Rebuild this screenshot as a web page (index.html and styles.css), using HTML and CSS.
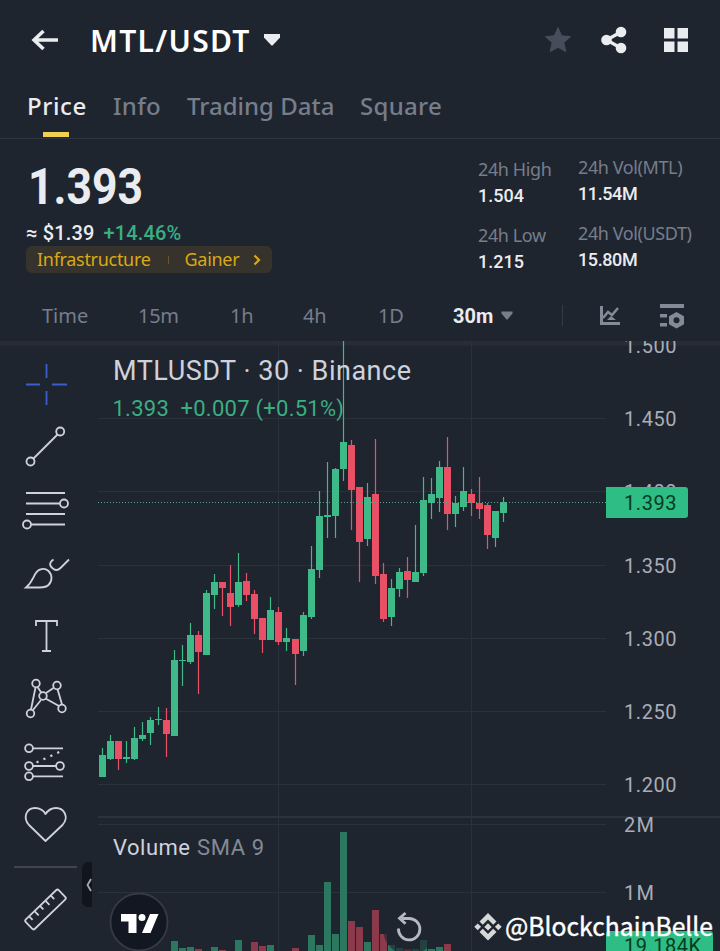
FILE: index.html
```html
<!DOCTYPE html>
<html lang="en">
<head>
<meta charset="utf-8">
<title>MTL/USDT</title>
<link rel="stylesheet" href="styles.css">
</head>
<body>
<main class="app">
  <header class="topbar">
    <svg class="back" width="28" height="22" viewBox="0 0 28 22"><path d="M12.500 2 3 11l9.500 9M3.500 11H27" fill="none" stroke="#eaecef" stroke-width="3.500"/></svg>
    <h1 class="pair"><span>MTL/USDT</span></h1>
    <svg class="caret" width="18" height="14" viewBox="0 0 18 14"><path d="M1 1h16v3.500L10 12q-1 1-2 0L1 4.500Z" fill="#eaecef"/></svg>
    <div class="actions">
      <svg width="28" height="28" viewBox="0 0 28 28"><path d="m14 1.500 3.600 8.300 9 .8-6.800 6 2 9-7.800-4.300L6.200 25.600l2-9-6.800-6 9-.8Z" fill="#474d5b" stroke="#474d5b" stroke-linejoin="round"/></svg>
      <svg width="28" height="28" viewBox="0 0 28 28"><g fill="#eaecef"><circle cx="6.500" cy="14" r="5.300"/><circle cx="21" cy="6" r="5.300"/><circle cx="21" cy="22" r="5.300"/></g><path d="m21 6-14.500 8L21 22" fill="none" stroke="#eaecef" stroke-width="3.300"/></svg>
      <svg width="28" height="28" viewBox="0 0 28 28"><path d="M2 2h10.500v10.500H2ZM15.500 2H26v10.500H15.500ZM2 15.500h10.500V26H2ZM15.500 15.500H26V26H15.500Z" fill="#eaecef"/></svg>
    </div>
  </header>
  <nav class="tabs">
    <a class="tab active t-price"><span>Price</span></a>
    <a class="tab t-info"><span>Info</span></a>
    <a class="tab t-data"><span>Trading Data</span></a>
    <a class="tab t-square"><span>Square</span></a>
  </nav>
  <section class="summary">
    <div class="quote">
      <div class="last"><span>1.393</span></div>
      <div class="fiat"><span class="approx">≈ $1.39</span><span class="up">+14.46%</span></div>
      <div class="tags"><span class="tag">Infrastructure</span><i></i><span class="tag">Gainer</span><svg width="8" height="12" viewBox="0 0 8 12"><path d="m1.500 1.500 4.500 4.500-4.500 4.500" fill="none" stroke="#dba817" stroke-width="2.200"/></svg></div>
    </div>
    <dl class="stats first">
      <dt>24h High</dt><dd>1.504</dd>
      <dt>24h Low</dt><dd>1.215</dd>
    </dl>
    <dl class="stats second">
      <dt>24h Vol(MTL)</dt><dd>11.54M</dd>
      <dt>24h Vol(USDT)</dt><dd>15.80M</dd>
    </dl>
  </section>
  <nav class="intervals">
    <span class="iv w1">Time</span><span class="iv w2">15m</span><span class="iv w3">1h</span><span class="iv w4">4h</span><span class="iv w5">1D</span><span class="iv on">30m</span>
    <svg class="small-caret" width="12" height="10" viewBox="0 0 12 10"><path d="M.5.5h11v2L6.500 8.500h-1L.5 2.500Z" fill="#767d8b"/></svg>
    <i class="split"></i>
    <svg class="chart-icon" width="22" height="22" viewBox="0 0 22 22"><path d="M2.500 1v17.500H21" fill="none" stroke="#858a98" stroke-width="3"/><path d="m4 13 5-6 4 3 6-7" fill="none" stroke="#858a98" stroke-width="2.500"/><path d="m8 15 4-4 5 4Z" fill="#858a98"/></svg>
    <svg class="set-icon" width="26" height="26" viewBox="0 0 26 26"><path d="M1 1h24v4H1ZM1 11h7v3.500H1ZM1 20h7v3.500H1Z" fill="#858a98"/><path d="m17.500 9 7.500 4.200v8L17.500 25.500 10 21.200v-8Z" fill="#858a98"/><circle cx="17.500" cy="17.200" r="3" fill="#1f252f"/></svg>
  </nav>
  <section class="workspace">
    <aside class="tools">
      <svg viewBox="0 353 97 63"><path d="M46.500 364v14m0 13v14M26 384.500h14m12 0h15" stroke="#3b5fca"/></svg>
      <svg viewBox="0 416 97 63"><path d="m33 459 24.500-24.500"/><circle cx="30.500" cy="461.500" r="4"/><circle cx="60.200" cy="431.500" r="4"/></svg>
      <svg viewBox="0 479 97 63"><path d="M26 493h39M26 503.500h34M26 514h39M31 524.500h34"/><circle cx="64" cy="503.500" r="4"/><circle cx="27" cy="524.500" r="4"/></svg>
      <svg viewBox="0 542 97 63"><path d="M26 587.500c6-5 7-10 9.500-14 3-5 9-6 13-2.500 4 4 4 10 0 14-3 3-8 2.500-22.500 2.500ZM53.500 559.500c-5 3-4 7 0 9.500 3 2 5 1 7-1l8.500-8.500"/></svg>
      <svg viewBox="0 605 97 63"><path d="M36 626v-5h21v5M46.500 621v30M42 651h9"/></svg>
      <svg viewBox="0 668 97 63"><path d="m35.500 687.500-4.500 22M37.500 687l4 6M46 693l7.500-5M45.500 698.500 59 706M57.500 689l4.500 15.500M33 710l8-10"/><circle cx="36" cy="683.500" r="3.800"/><circle cx="57" cy="685.500" r="3.800"/><circle cx="43" cy="696" r="3.800"/><circle cx="30.500" cy="713.500" r="3.800"/><circle cx="62" cy="708.500" r="3.800"/></svg>
      <svg viewBox="0 731 97 63"><path d="M33 748.300h30M33 766h23M33 776.300h30"/><path d="m36.500 762.500 24-11" stroke-dasharray="2.200 5.400" stroke-width="2.200"/><circle cx="29" cy="748.300" r="3.900"/><circle cx="29" cy="766" r="3.900"/><circle cx="60" cy="766" r="3.900"/><circle cx="29" cy="776.300" r="3.900"/></svg>
      <svg viewBox="0 794 97 63"><path d="M45.500 841 29 825c-7-8-2-17 6-17 5 0 9 3 10.500 6 2-3 6-6 10.500-6 8 0 13.500 9 6.500 17Z" stroke-linejoin="round"/></svg>
      <div class="rule"></div>
      <svg viewBox="0 878 97 63"><g transform="rotate(-44 45.500 909.500)" stroke-linejoin="round"><rect x="22.500" y="903" width="46" height="13" rx="2"/><path d="M29 903v5M36.500 903v6M44 903v5M51.500 903v6M59 903v5"/></g></svg>
      <div class="collapse"><svg viewBox="0 0 6 14"><path d="M5 1 1.500 7 5 13"/></svg></div>
    </aside>
    <svg class="chart" width="623" height="610" viewBox="97 341 623 610">
      <g id="grid"></g>
      <g class="axis">
        <text x="624" y="353" textLength="52.500">1.500</text>
        <text x="624" y="426" textLength="52.500">1.450</text>
        <text x="624" y="499" textLength="52.500">1.400</text>
        <text x="624" y="573" textLength="52.500">1.350</text>
        <text x="624" y="646" textLength="52.500">1.300</text>
        <text x="624" y="719" textLength="52.500">1.250</text>
        <text x="624" y="792" textLength="52.500">1.200</text>
        <text x="624" y="832" textLength="30">2M</text>
        <text x="624" y="899.500" textLength="30">1M</text>
      </g>
      <g id="volume"></g>
      <g id="candles"></g>
      <path class="price-line" d="M98 502.500h508"/>
      <path d="M606 487h79q3 0 3 3v25q0 3-3 3h-79Z" fill="#2ebd85"/>
      <text class="mark" x="624" y="510" textLength="52.500">1.393</text>
      <text class="symbol" x="113" y="380" textLength="298">MTLUSDT · 30 · Binance</text>
      <text class="change" x="112.500" y="416" textLength="231.500" xml:space="preserve">1.393  +0.007 (+0.51%)</text>
      <text class="vol" x="113" y="855" textLength="77">Volume</text>
      <text class="sma" x="197" y="855" textLength="67">SMA 9</text>
      <circle cx="139" cy="922" r="28.500" fill="#131722" stroke="#363a45" stroke-width="1.800"/>
      <path d="M121 914h15.500v19h-8v-11.500H121ZM150 914h8.500l-8 19H142Z" fill="#fff"/><circle cx="142" cy="917.500" r="3.500" fill="#fff"/>
      <circle cx="409" cy="929" r="26" fill="#1f252f" opacity=".65"/>
      <path d="M398.500 928.500a10.700 10.700 0 1 0 10.500-10h-7M405.500 913l-6 5.300 6 5.500" fill="none" stroke="#b6b9c5" stroke-width="2.800"/>
      <path d="M606 934q0-3 3-3h101q3 0 3 3v17H606Z" fill="#2ebd85"/>
      <text class="mark" x="624" y="953" textLength="77">19.184K</text>
      <g fill="#d6d7d9"><path d="m488 913 8.500 8.500-3.300 3.300-5.200-5.200-5.200 5.200-3.300-3.300ZM488 940.500l8.500-8.500-3.300-3.300-5.200 5.200-5.200-5.200-3.300 3.300ZM488 923.200l3.700 3.700-3.700 3.700-3.700-3.700ZM477.700 923.400l3.400 3.400-3.400 3.400-3.400-3.400ZM498.300 923.400l3.400 3.400-3.400 3.400-3.400-3.400Z"/></g>
      <text class="handle" x="505" y="936" textLength="208" lengthAdjust="spacingAndGlyphs">@BlockchainBelle</text>
    </svg>
  </section>
</main>
<script src="chart.js"></script>
</body>
</html>
```
FILE: styles.css
```css
* { box-sizing: border-box; }
body { margin: 0; background: #1f252f; color: #eaecef; font-family: "Noto Sans", sans-serif; }
.app { width: 720px; height: 951px; overflow: hidden; }
svg { display: block; flex: none; }
span { white-space: nowrap; }

.topbar { display: flex; align-items: center; height: 79px; padding-left: 31px; }
.back { margin-right: 31px; }
.pair { margin: 3px 0 0; width: 173px; font-size: 30px; font-weight: 600; letter-spacing: 1.3px; line-height: 40px; color: #fff; }
.actions { display: flex; margin-left: auto; padding-right: 30px; gap: 34px; }
.actions svg:first-child { margin-right: -6px; }

.tabs { display: flex; height: 60px; border-bottom: 1px solid #2f353f; padding-left: 27px; }
.tab { height: 59px; padding-top: 10px; font-size: 24px; line-height: 34px; font-weight: 500; color: #767d8b; }
.tab.active { color: #eaecef; display: flex; flex-direction: column; letter-spacing: .6px; }
.tab.active::after { content: ""; width: 26px; height: 5px; margin: 9px 0 0 16px; background: #f0d050; }
.t-price { width: 86px; }
.t-info { width: 74px; letter-spacing: .3px; }
.t-data { width: 173px; }
.t-square { letter-spacing: .3px; }

.summary { display: flex; height: 151px; }
.quote { width: 478px; padding: 19px 0 0 26px; font-family: Roboto, sans-serif; }
.last { height: 60px; padding-left: 2px; font-size: 50px; line-height: 59px; font-weight: 700; }
.last span { display: inline-block; transform: scaleX(.89); transform-origin: left; }
.fiat { display: flex; gap: 9px; height: 28px; font-size: 20px; line-height: 31px; font-weight: 500; letter-spacing: .15px; }
.up { color: #3aae83; }
.tags { display: flex; align-items: center; width: 246px; height: 27px; padding-left: 11px; border-radius: 6px; background: #35332c; color: #dba817; font-family: "Noto Sans", sans-serif; font-size: 18px; line-height: 24px; letter-spacing: -.3px; }
.tag { margin-top: -2px; }
.tags i { width: 1px; height: 8px; background: #665923; margin: 0 16px 0 17px; }
.tags svg { margin-left: 14px; }
.stats { margin: 0; font-size: 18px; line-height: 26px; }
.stats.first { width: 100px; padding-top: 18px; }
.stats.second { padding-top: 16px; }
dt { position: relative; top: -1px; color: #767d8b; white-space: nowrap; letter-spacing: -.4px; }
dd { margin: 0 0 14px; font-family: Roboto, sans-serif; font-weight: 500; }
.stats.second dd { letter-spacing: -.4px; }

.intervals { display: flex; align-items: center; height: 51px; padding-left: 42px; font-size: 20px; color: #767d8b; }
.iv { line-height: 30px; letter-spacing: -.3px; }
.w1 { width: 96px; letter-spacing: 0; }
.w2 { width: 92px; }
.w3 { width: 73px; }
.w4 { width: 75px; }
.w5 { width: 75px; }
.on { width: 48px; font-family: Roboto, sans-serif; font-weight: 700; color: #eaecef; letter-spacing: 0; }
.split { width: 1px; height: 21px; margin-left: 49px; background: #353b46; }
.chart-icon { margin-left: 36px; }
.set-icon { margin-left: 38px; }

.workspace { display: flex; height: 610px; background: linear-gradient(#272c36 0 4px, #1f252f 5px); }
.tools { position: relative; width: 97px; padding-top: 12px; }
.tools > svg { width: 97px; height: 63px; }
.tools svg { fill: none; stroke: #ced2dc; stroke-width: 1.800; }
.rule { width: 63px; height: 2px; margin: 9px 0 10px 14px; background: #41454d; }
.collapse { position: absolute; left: 82px; top: 521px; width: 10px; height: 45px; padding: 16px 0 0 4px; border-radius: 6px 0 0 6px; background: #11151e; }
.collapse svg { width: 6px; height: 14px; stroke: #a5a9b3; }

.chart { font-family: Roboto, sans-serif; }
.grid-line { stroke: #2b313b; stroke-width: 1; }
.divider { stroke: #2d333d; stroke-width: 2; }
.axis { font-size: 20px; fill: #a9adb7; }
.price-line { stroke: #55a58b; stroke-width: 1; stroke-dasharray: 1 2; }
.mark { font-size: 20px; fill: #073b20; }
.symbol { font-size: 27px; fill: #ced2dc; }
.change { font-size: 22px; fill: #3aae83; }
.vol { font-size: 22px; fill: #ced2dc; }
.sma { font-size: 22px; fill: #858994; }
.handle { font-family: "Noto Sans CJK SC", sans-serif; font-size: 25px; font-weight: 400; fill: #fff; stroke: #fff; stroke-width: .4; }
.up-bar { fill: #3dba87; stroke: #3dba87; }
.down-bar { fill: #ea5065; stroke: #ea5065; }
.candle path { stroke-width: 1.200; }
.candle rect { stroke: none; }
.up-vol { fill: #2b7760; }
.down-vol { fill: #8a3a4a; }
```
FILE: chart.js
```js
// Each candle: direction, wick top, body top, body bottom, wick bottom
const candles = [
  ['u',748,755,777,777],['u',735,741,759,760],['d',741,741,759,770],['u',741,757,759,763],
  ['u',727,738,759,760],['u',722,735,739,741],['u',717,720,733,745],['u',707,719,720,725],
  ['d',708,720,734,757],['u',650,660,736,736],['u',645,660,661,686],['u',623,635,662,664],
  ['d',631,635,652,694],['u',590,593,655,655],['u',574,582,595,609],['d',582,582,588,616],
  ['d',565,593,607,626],['u',553,582,605,607],['d',573,581,595,601],['d',590,594,619,634],
  ['d',618,618,640,653],['u',597,610,640,640],['d',607,612,642,645],['u',628,638,642,651],
  ['d',639,639,654,685],['u',612,615,651,656],['u',546,569,617,619],['u',491,516,570,578],
  ['u',462,515,517,538],['u',468,469,516,538],['u',341,442,469,481],['d',440,445,490,530],
  ['d',487,487,542,582],['u',483,497,539,546],['d',439,494,576,584],['d',563,574,619,622],
  ['u',579,588,617,626],['u',568,572,589,597],['d',557,571,580,598],['u',525,572,582,582],
  ['u',477,500,573,576],['u',478,494,503,519],['u',461,467,498,512],['d',437,467,514,530],
  ['u',496,503,514,527],['u',467,491,507,511],['d',489,494,503,516],['d',477,503,509,519],
  ['d',503,505,535,549],['u',511,511,538,547],['u',497,502,513,522]
];
// Volume bar tops by candle index
const volume = {
  9:941,10:948,11:947,12:949,14:947,15:950,17:940,19:942,20:946,21:945,24:948,26:935,
  27:945,28:882,29:934,30:832,31:921,32:927,33:942,34:910,35:934,36:945,37:948,38:949,
  39:949,40:940,41:949,42:947,43:944
};
const left = i => 99 + 8 * i + (i > 23 ? 1 : 0);

document.getElementById('candles').innerHTML = candles.map(([dir, high, top, bottom, low], i) =>
  `<g class="candle ${dir === 'u' ? 'up-bar' : 'down-bar'}"><path d="M${left(i) + 3.5} ${high}V${low}"/><rect x="${left(i)}" y="${top}" width="7" height="${bottom - top}"/></g>`
).join('');

document.getElementById('volume').innerHTML = Object.entries(volume).map(([i, top]) =>
  `<rect class="${candles[i][0] === 'u' ? 'up-vol' : 'down-vol'}" x="${left(+i)}" y="${top}" width="7" height="${951 - top}"/>`
).join('');

document.getElementById('grid').innerHTML =
  [418.5, 491.5, 565.5, 638.5, 711.5, 784.5, 824.5, 892.5].map(y => `<path class="grid-line" d="M98 ${y}H606"/>`).join('') +
  [278.5, 471.5].map(x => `<path class="grid-line" d="M${x} 341V951"/>`).join('') +
  '<path class="divider" d="M98 817H720"/>';
```
